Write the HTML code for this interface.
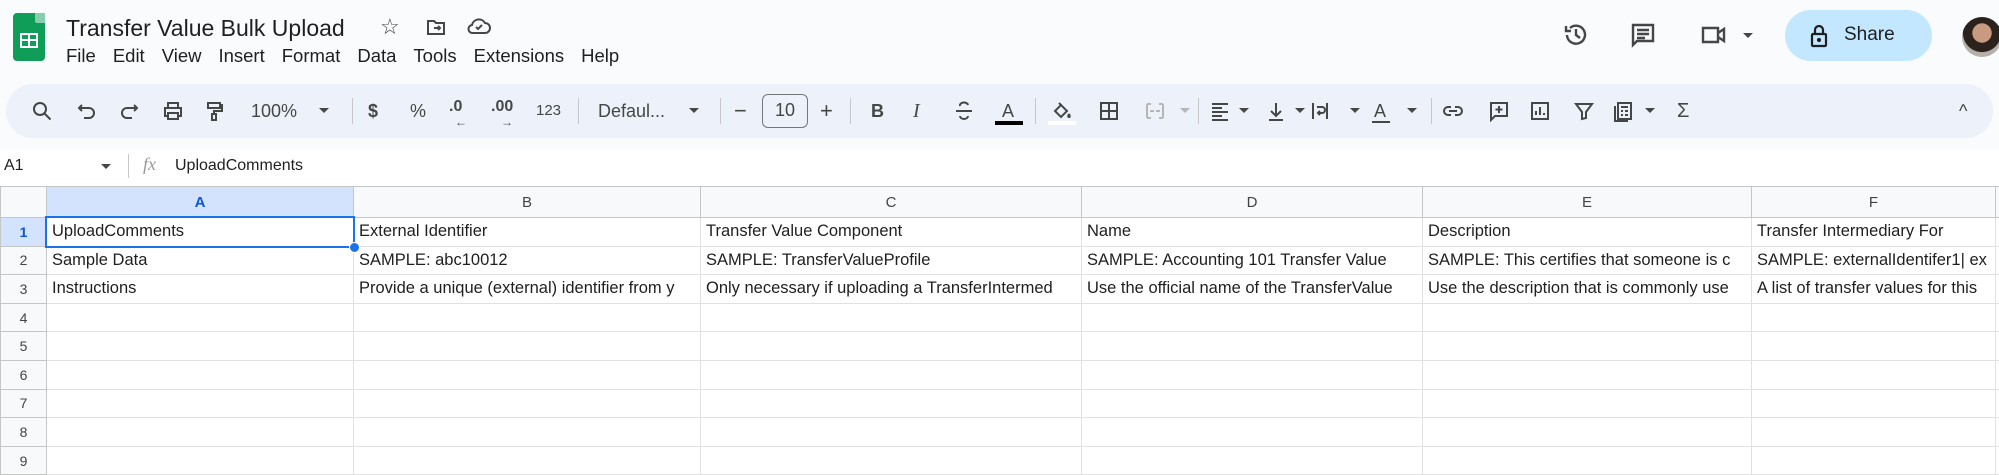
<!DOCTYPE html>
<html><head><meta charset="utf-8"><style>
*{margin:0;padding:0;box-sizing:border-box}
body{width:1999px;height:468px;overflow:hidden;background:#f9fbfd;font-family:"Liberation Sans",Arial,sans-serif;color:#1f1f1f;position:relative}
.a{position:absolute}
.ic{position:absolute;top:100px;width:22px;height:22px}
.ic svg{width:22px;height:22px;fill:none;stroke:#444746;stroke-width:2}
.t{position:absolute;top:100px;font-size:18px;color:#444746;line-height:22px}
.dd{position:absolute;top:108px;width:0;height:0;border-left:5px solid transparent;border-right:5px solid transparent;border-top:5px solid #444746}
.sep{position:absolute;top:98px;width:1px;height:26px;background:#c7c7c7}
.menu span{margin-right:17px}
table{position:absolute;left:0;top:186px;border-collapse:collapse;table-layout:fixed;background:#fff;width:2005px}
td{border:1px solid #e1e1e1;height:28.6px;font-size:16.5px;white-space:nowrap;overflow:hidden;padding:0 5px;vertical-align:middle}
tr.h td{height:31px;background:#f8f9fa;text-align:center;color:#444;font-size:15px;border-color:#c4c7c5}
td.n{background:#f8f9fa;text-align:center;font-size:14px;color:#444;padding:0;border-color:#c4c7c5}
</style></head><body>
<div class="a" style="left:13px;top:13px;width:32px;height:48px;background:#0f9d58;border-radius:4px"></div>
<div class="a" style="left:35px;top:13px;width:10px;height:10px;background:#87ceac;border-bottom-left-radius:2px"></div>
<div class="a" style="left:20px;top:33px;width:18px;height:15px;border:2px solid #fff;"></div>
<div class="a" style="left:28px;top:33px;width:2px;height:15px;background:#fff"></div>
<div class="a" style="left:20px;top:39px;width:18px;height:2px;background:#fff"></div>
<div class="a" style="left:66px;top:13px;font-size:23px;line-height:30px">Transfer Value Bulk Upload</div>
<div class="a" style="left:380px;top:14px;font-size:22px;color:#444746">☆</div>
<svg class="a" style="left:425px;top:16px" width="22" height="22" viewBox="0 0 22 22" fill="none" stroke="#444746" stroke-width="2"><path d="M3 5h6l2 2h8v11H3z"/><path d="M9 12h6m-2-2l2 2-2 2"/></svg>
<svg class="a" style="left:466px;top:14px" width="26" height="24" viewBox="0 0 26 24" fill="none" stroke="#444746" stroke-width="2"><path d="M7 19h12a5 5 0 0 0 0-10 7 7 0 0 0-13 2 4 4 0 0 0 1 8z"/><path d="M10 13l2 2 4-4"/></svg>
<div class="a menu" style="left:66px;top:45px;font-size:18.5px;line-height:22px"><span>File</span><span>Edit</span><span>View</span><span>Insert</span><span>Format</span><span>Data</span><span>Tools</span><span>Extensions</span><span>Help</span></div>
<svg class="a" style="left:1562px;top:21px" width="28" height="28" viewBox="0 0 28 28" fill="none" stroke="#444746" stroke-width="2.4"><path d="M5 14a9 9 0 1 0 3-7"/><path d="M4 5v5h5"/><path d="M14 8v6l4 3"/></svg>
<svg class="a" style="left:1629px;top:21px" width="28" height="28" viewBox="0 0 28 28" fill="none" stroke="#444746" stroke-width="2.4"><path d="M4 4h20v16H8l-4 4z"/><path d="M8 9h12M8 13h12M8 17h8"/></svg>
<svg class="a" style="left:1700px;top:22px" width="28" height="26" viewBox="0 0 28 26" fill="none" stroke="#444746" stroke-width="2.4"><path d="M3 6h15v14H3zM18 11l6-4v12l-6-4"/></svg>
<div class="dd" style="left:1743px;top:33px"></div>
<div class="a" style="left:1785px;top:10px;width:147px;height:51px;border-radius:26px;background:#c2e7ff"></div>
<svg class="a" style="left:1810px;top:24px" width="18" height="24" viewBox="0 0 18 24" fill="none" stroke="#1f1f1f" stroke-width="2.2"><rect x="2" y="10" width="14" height="12" rx="1"/><path d="M5 10V6a4 4 0 0 1 8 0v4"/><circle cx="9" cy="16" r="1" fill="#1f1f1f"/></svg>
<div class="a" style="left:1844px;top:24px;font-size:19px;font-weight:500">Share</div>
<div class="a" style="left:1962px;top:17px;width:40px;height:40px;border-radius:50%;background:radial-gradient(circle at 50% 40%,#c89a80 0 30%,#2b211d 32% 60%,#b5b0aa 62%)"></div>
<div class="a" style="left:6px;top:84px;width:1987px;height:54px;border-radius:27px;background:#edf2fa"></div>
<div class="ic" style="left:31px"><svg viewBox="0 0 22 22"><circle cx="9" cy="9" r="6"/><path d="M13.5 13.5l6 6"/></svg></div>
<div class="ic" style="left:76px"><svg viewBox="0 0 22 22"><path d="M6 5L3 8l3 3"/><path d="M3 8h10a5 5 0 0 1 0 10H8"/></svg></div>
<div class="ic" style="left:118px"><svg viewBox="0 0 22 22"><path d="M16 5l3 3-3 3"/><path d="M19 8H9a5 5 0 0 0 0 10h5"/></svg></div>
<div class="ic" style="left:162px"><svg viewBox="0 0 22 22"><path d="M6 8V3h10v5M6 16H3V8h16v8h-3"/><path d="M6 13h10v6H6z"/></svg></div>
<div class="ic" style="left:203px"><svg viewBox="0 0 22 22"><path d="M5 3h12v5H5zM17 5h2v6h-8v3M9 14h4v6H9z"/></svg></div>
<div class="t" style="left:251px">100%</div><div class="dd" style="left:319px"></div>
<div class="sep" style="left:352px"></div>
<div class="t" style="left:368px;font-weight:bold">$</div>
<div class="t" style="left:410px">%</div>
<div class="t" style="left:449px;font-size:16px;top:96px;font-weight:bold">.0<span style="font-size:12px;display:block;line-height:8px;margin-left:6px">←</span></div>
<div class="t" style="left:491px;font-size:16px;top:96px;font-weight:bold">.00<span style="font-size:12px;display:block;line-height:8px;margin-left:10px">→</span></div>
<div class="t" style="left:536px;font-size:15px">123</div>
<div class="sep" style="left:578px"></div>
<div class="t" style="left:598px">Defaul...</div><div class="dd" style="left:689px"></div>
<div class="sep" style="left:720px"></div>
<div class="t" style="left:734px;font-size:22px">−</div>
<div class="a" style="left:762px;top:94px;width:46px;height:34px;border:1.5px solid #747775;border-radius:6px;font-size:18px;color:#444746;text-align:center;line-height:31px">10</div>
<div class="t" style="left:820px;font-size:22px">+</div>
<div class="sep" style="left:850px"></div>
<div class="t" style="left:871px;font-weight:bold">B</div>
<div class="t" style="left:913px;font-style:italic;font-family:'Liberation Serif',serif;font-size:20px">I</div>
<div class="ic" style="left:953px"><svg viewBox="0 0 22 22"><path d="M3 11h16M15 5a4 3 0 0 0-8 1M7 16a4 3 0 0 0 8 0"/></svg></div>
<div class="t" style="left:1002px">A</div><div class="a" style="left:995px;top:121px;width:28px;height:4px;background:#000"></div>
<div class="sep" style="left:1035px"></div>
<div class="ic" style="left:1050px"><svg viewBox="0 0 22 22"><path d="M5 11l6-6 6 6-6 6zM9 3l3 3"/><path d="M19 14c1 2 1 3 0 3s-1-1 0-3" fill="#444746"/></svg></div>
<div class="a" style="left:1048px;top:121px;width:28px;height:4px;background:#fff"></div>
<div class="ic" style="left:1098px"><svg viewBox="0 0 22 22"><path d="M3 3h16v16H3zM11 3v16M3 11h16"/></svg></div>
<div class="ic" style="left:1144px"><svg viewBox="0 0 22 22" style="stroke:#b5b6b5"><path d="M3 4h4M3 18h4M15 4h4M15 18h4M3 4v14M19 4v14M6 11h4M12 11h4"/></svg></div>
<div class="dd" style="left:1180px;border-top-color:#b5b6b5"></div>
<div class="sep" style="left:1198px"></div>
<div class="ic" style="left:1209px"><svg viewBox="0 0 22 22"><path d="M3 4h16M3 8h10M3 12h16M3 16h10M3 20h16"/></svg></div><div class="dd" style="left:1239px"></div>
<div class="ic" style="left:1265px"><svg viewBox="0 0 22 22"><path d="M11 3v13M6 11l5 5 5-5M4 20h14"/></svg></div><div class="dd" style="left:1295px"></div>
<div class="ic" style="left:1309px"><svg viewBox="0 0 22 22"><path d="M4 3v16M18 3v16M8 7h5a3 3 0 0 1 0 6H9M11 11l-2 2 2 2"/></svg></div><div class="dd" style="left:1350px"></div>
<div class="t" style="left:1374px">A</div><div class="a" style="left:1372px;top:121px;width:18px;height:2px;background:#444746"></div><div class="dd" style="left:1407px"></div>
<div class="sep" style="left:1431px"></div>
<div class="ic" style="left:1442px"><svg viewBox="0 0 22 22"><path d="M9 7H6a4 4 0 0 0 0 8h3M13 7h3a4 4 0 0 1 0 8h-3M7 11h8"/></svg></div>
<div class="ic" style="left:1488px"><svg viewBox="0 0 22 22"><path d="M3 3h16v13H7l-4 4zM11 6v7M7.5 9.5h7"/></svg></div>
<div class="ic" style="left:1529px"><svg viewBox="0 0 22 22"><path d="M3 3h16v16H3zM7 15v-4M11 15V7M15 15v-2"/></svg></div>
<div class="ic" style="left:1573px"><svg viewBox="0 0 22 22"><path d="M3 4h16l-6 8v6l-4 1v-7z"/></svg></div>
<div class="ic" style="left:1613px"><svg viewBox="0 0 22 22"><path d="M5 3h13v16H5zM2 6v15h13M8 7h7M8 11h2M12 11h3M8 15h2M12 15h3"/></svg></div><div class="dd" style="left:1645px"></div>
<div class="t" style="left:1677px;font-size:20px">Σ</div>
<div class="t" style="left:1959px;font-size:18px">^</div>
<div class="a" style="left:0;top:150px;width:1999px;height:36px;background:#fff"></div>
<div class="a" style="left:4px;top:157px;font-size:16px">A1</div>
<div class="dd" style="left:101px;top:164px"></div>
<div class="a" style="left:128px;top:154px;width:1px;height:24px;background:#c7c7c7"></div>
<div class="a" style="left:143px;top:154px;font-size:18px;font-style:italic;color:#999;font-family:'Liberation Serif',serif">fx</div>
<div class="a" style="left:175px;top:157px;font-size:16px">UploadComments</div>
<table>
<colgroup><col style="width:46px"><col style="width:307px"><col style="width:347px"><col style="width:381px"><col style="width:341px"><col style="width:329px"><col style="width:244px"><col style="width:10px"></colgroup>
<tr class="h"><td class="n"></td><td style="background:#d3e3fd;font-weight:bold;color:#0b57d0">A</td><td>B</td><td>C</td><td>D</td><td>E</td><td>F</td><td></td></tr>
<tr><td class="n" style="background:#d3e3fd;font-weight:bold;color:#0b57d0">1</td><td>UploadComments</td><td>External Identifier</td><td>Transfer Value Component</td><td>Name</td><td>Description</td><td>Transfer Intermediary For</td><td></td></tr>
<tr><td class="n">2</td><td>Sample Data</td><td>SAMPLE: abc10012</td><td>SAMPLE: TransferValueProfile</td><td>SAMPLE: Accounting 101 Transfer Value</td><td>SAMPLE: This certifies that someone is c</td><td>SAMPLE: externalIdentifer1| ex</td><td></td></tr>
<tr><td class="n">3</td><td>Instructions</td><td>Provide a unique (external) identifier from y</td><td>Only necessary if uploading a TransferIntermed</td><td>Use the official name of the TransferValue</td><td>Use the description that is commonly use</td><td>A list of transfer values for this</td><td></td></tr>
<tr><td class="n">4</td><td></td><td></td><td></td><td></td><td></td><td></td><td></td></tr>
<tr><td class="n">5</td><td></td><td></td><td></td><td></td><td></td><td></td><td></td></tr>
<tr><td class="n">6</td><td></td><td></td><td></td><td></td><td></td><td></td><td></td></tr>
<tr><td class="n">7</td><td></td><td></td><td></td><td></td><td></td><td></td><td></td></tr>
<tr><td class="n">8</td><td></td><td></td><td></td><td></td><td></td><td></td><td></td></tr>
<tr><td class="n">9</td><td></td><td></td><td></td><td></td><td></td><td></td><td></td></tr>
</table>
<div class="a" style="left:45px;top:216px;width:310px;height:32px;border:2px solid #1a73e8"></div>
<div class="a" style="left:349px;top:242px;width:11px;height:11px;border-radius:50%;background:#1a73e8;border:1px solid #fff"></div>
</body></html>
